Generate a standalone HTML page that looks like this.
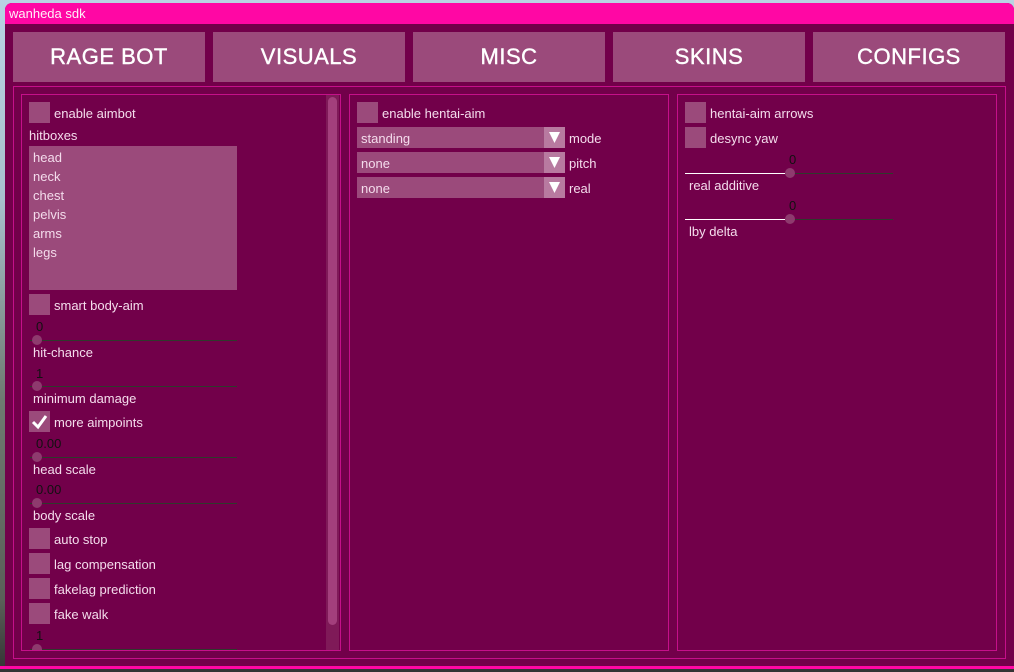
<!DOCTYPE html>
<html><head><meta charset="utf-8"><style>
*{margin:0;padding:0;box-sizing:border-box}
body{width:1014px;height:672px;overflow:hidden;background:linear-gradient(180deg,#b9d3e3 0,#a8c0cc 200px,#6e7a70 400px,#5a5f58 600px,#333 672px);font-family:"Liberation Sans",sans-serif;position:relative}
.a{position:absolute}
.win{left:5px;top:3px;width:1009px;height:663px;background:#72004a;border-top-left-radius:7px;border-top-right-radius:7px;overflow:hidden}
.title{left:0;top:0;width:1009px;height:21px;background:#ff07a4;color:#fff0f8;font-size:13px;line-height:21px;padding-left:4px}
.tab{top:32px;width:192px;height:50px;background:#9b4a7b;color:#fff;font-size:22px;text-align:center;line-height:50px;letter-spacing:0.5px;-webkit-text-stroke:0.4px #fff}
.grp{border:1px solid #c5108a}
.cb{width:21px;height:21px;background:#9b4a7b}
.t{color:#f4dcec;font-size:13px;line-height:15px;white-space:nowrap}
.n{color:#111;font-size:13px;line-height:14px}
.ln{height:1px;background:#2f3a2c}
.kn{width:10px;height:10px;border-radius:50%;background:#8e3a6e}
.dd{height:21px;background:#9b4a7b;width:208px}
.ddb{width:21px;height:21px;background:#b87aa0}
</style></head><body>
<div class="a win">
<div class="a title">wanheda sdk</div>
</div>
<div class="a" style="left:0;top:666px;width:1014px;height:3px;background:#ff07a4"></div>
<div class="a tab" style="left:13px">RAGE BOT</div>
<div class="a tab" style="left:213px">VISUALS</div>
<div class="a tab" style="left:413px">MISC</div>
<div class="a tab" style="left:613px">SKINS</div>
<div class="a tab" style="left:813px">CONFIGS</div>
<div class="a grp" style="left:13px;top:86px;width:993px;height:573px"></div>
<div class="a grp" style="left:21px;top:94px;width:320px;height:557px"></div>
<div class="a grp" style="left:349px;top:94px;width:320px;height:557px"></div>
<div class="a grp" style="left:677px;top:94px;width:320px;height:557px"></div>
<!-- scrollbar -->
<div class="a" style="left:326px;top:95px;width:13px;height:555px;background:#7f1a58"></div>
<div class="a" style="left:328px;top:97px;width:9px;height:528px;background:#a33f7c;border-radius:5px"></div>

<!-- panel 1 -->
<div class="a cb" style="left:29px;top:102px"></div><div class="a t" style="left:54px;top:106px">enable aimbot</div>
<div class="a t" style="left:29px;top:128px">hitboxes</div>
<div class="a" style="left:29px;top:146px;width:208px;height:144px;background:#9b4a7b"></div>
<div class="a t" style="left:33px;top:148px;line-height:19px">head<br>neck<br>chest<br>pelvis<br>arms<br>legs</div>
<div class="a cb" style="left:29px;top:294px"></div><div class="a t" style="left:54px;top:298px">smart body-aim</div>
<div class="a n" style="left:36px;top:320px">0</div>
<div class="a ln" style="left:30px;top:340px;width:207px"></div><div class="a kn" style="left:32px;top:335px"></div>
<div class="a t" style="left:33px;top:345px">hit-chance</div>
<div class="a n" style="left:36px;top:367px">1</div>
<div class="a ln" style="left:30px;top:386px;width:207px"></div><div class="a kn" style="left:32px;top:381px"></div>
<div class="a t" style="left:33px;top:391px">minimum damage</div>
<div class="a cb" style="left:29px;top:411px"></div>
<svg class="a" style="left:29px;top:411px" width="21" height="21"><path d="M4 11 L9 16 L17 5" stroke="#fff" stroke-width="3" fill="none"/></svg>
<div class="a t" style="left:54px;top:415px">more aimpoints</div>
<div class="a n" style="left:36px;top:437px">0.00</div>
<div class="a ln" style="left:30px;top:457px;width:207px"></div><div class="a kn" style="left:32px;top:452px"></div>
<div class="a t" style="left:33px;top:462px">head scale</div>
<div class="a n" style="left:36px;top:483px">0.00</div>
<div class="a ln" style="left:30px;top:503px;width:207px"></div><div class="a kn" style="left:32px;top:498px"></div>
<div class="a t" style="left:33px;top:508px">body scale</div>
<div class="a cb" style="left:29px;top:528px"></div><div class="a t" style="left:54px;top:532px">auto stop</div>
<div class="a cb" style="left:29px;top:553px"></div><div class="a t" style="left:54px;top:557px">lag compensation</div>
<div class="a cb" style="left:29px;top:578px"></div><div class="a t" style="left:54px;top:582px">fakelag prediction</div>
<div class="a cb" style="left:29px;top:603px"></div><div class="a t" style="left:54px;top:607px">fake walk</div>
<div class="a n" style="left:36px;top:629px">1</div>
<div class="a ln" style="left:30px;top:649px;width:207px"></div><div class="a kn" style="left:32px;top:644px;height:6px;border-radius:5px 5px 0 0"></div>

<!-- panel 2 -->
<div class="a cb" style="left:357px;top:102px"></div><div class="a t" style="left:382px;top:106px">enable hentai-aim</div>
<div class="a dd" style="left:357px;top:127px"></div><div class="a ddb" style="left:544px;top:127px"></div>
<div class="a t" style="left:361px;top:131px">standing</div><div class="a t" style="left:569px;top:131px">mode</div>
<div class="a dd" style="left:357px;top:152px"></div><div class="a ddb" style="left:544px;top:152px"></div>
<div class="a t" style="left:361px;top:156px">none</div><div class="a t" style="left:569px;top:156px">pitch</div>
<div class="a dd" style="left:357px;top:177px"></div><div class="a ddb" style="left:544px;top:177px"></div>
<div class="a t" style="left:361px;top:181px">none</div><div class="a t" style="left:569px;top:181px">real</div>
<svg class="a" style="left:544px;top:127px" width="21" height="71"><g fill="#fff"><path d="M5 5 L16 5 L10.5 16Z"/><path d="M5 30 L16 30 L10.5 41Z"/><path d="M5 55 L16 55 L10.5 66Z"/></g></svg>

<!-- panel 3 -->
<div class="a cb" style="left:685px;top:102px"></div><div class="a t" style="left:710px;top:106px">hentai-aim arrows</div>
<div class="a cb" style="left:685px;top:127px"></div><div class="a t" style="left:710px;top:131px">desync yaw</div>
<div class="a n" style="left:789px;top:153px">0</div>
<div class="a ln" style="left:685px;top:173px;width:208px"></div><div class="a" style="left:685px;top:173px;width:100px;height:1px;background:#fff"></div><div class="a kn" style="left:785px;top:168px"></div>
<div class="a t" style="left:689px;top:178px">real additive</div>
<div class="a n" style="left:789px;top:199px">0</div>
<div class="a ln" style="left:685px;top:219px;width:208px"></div><div class="a" style="left:685px;top:219px;width:100px;height:1px;background:#fff"></div><div class="a kn" style="left:785px;top:214px"></div>
<div class="a t" style="left:689px;top:224px">lby delta</div>
</body></html>
